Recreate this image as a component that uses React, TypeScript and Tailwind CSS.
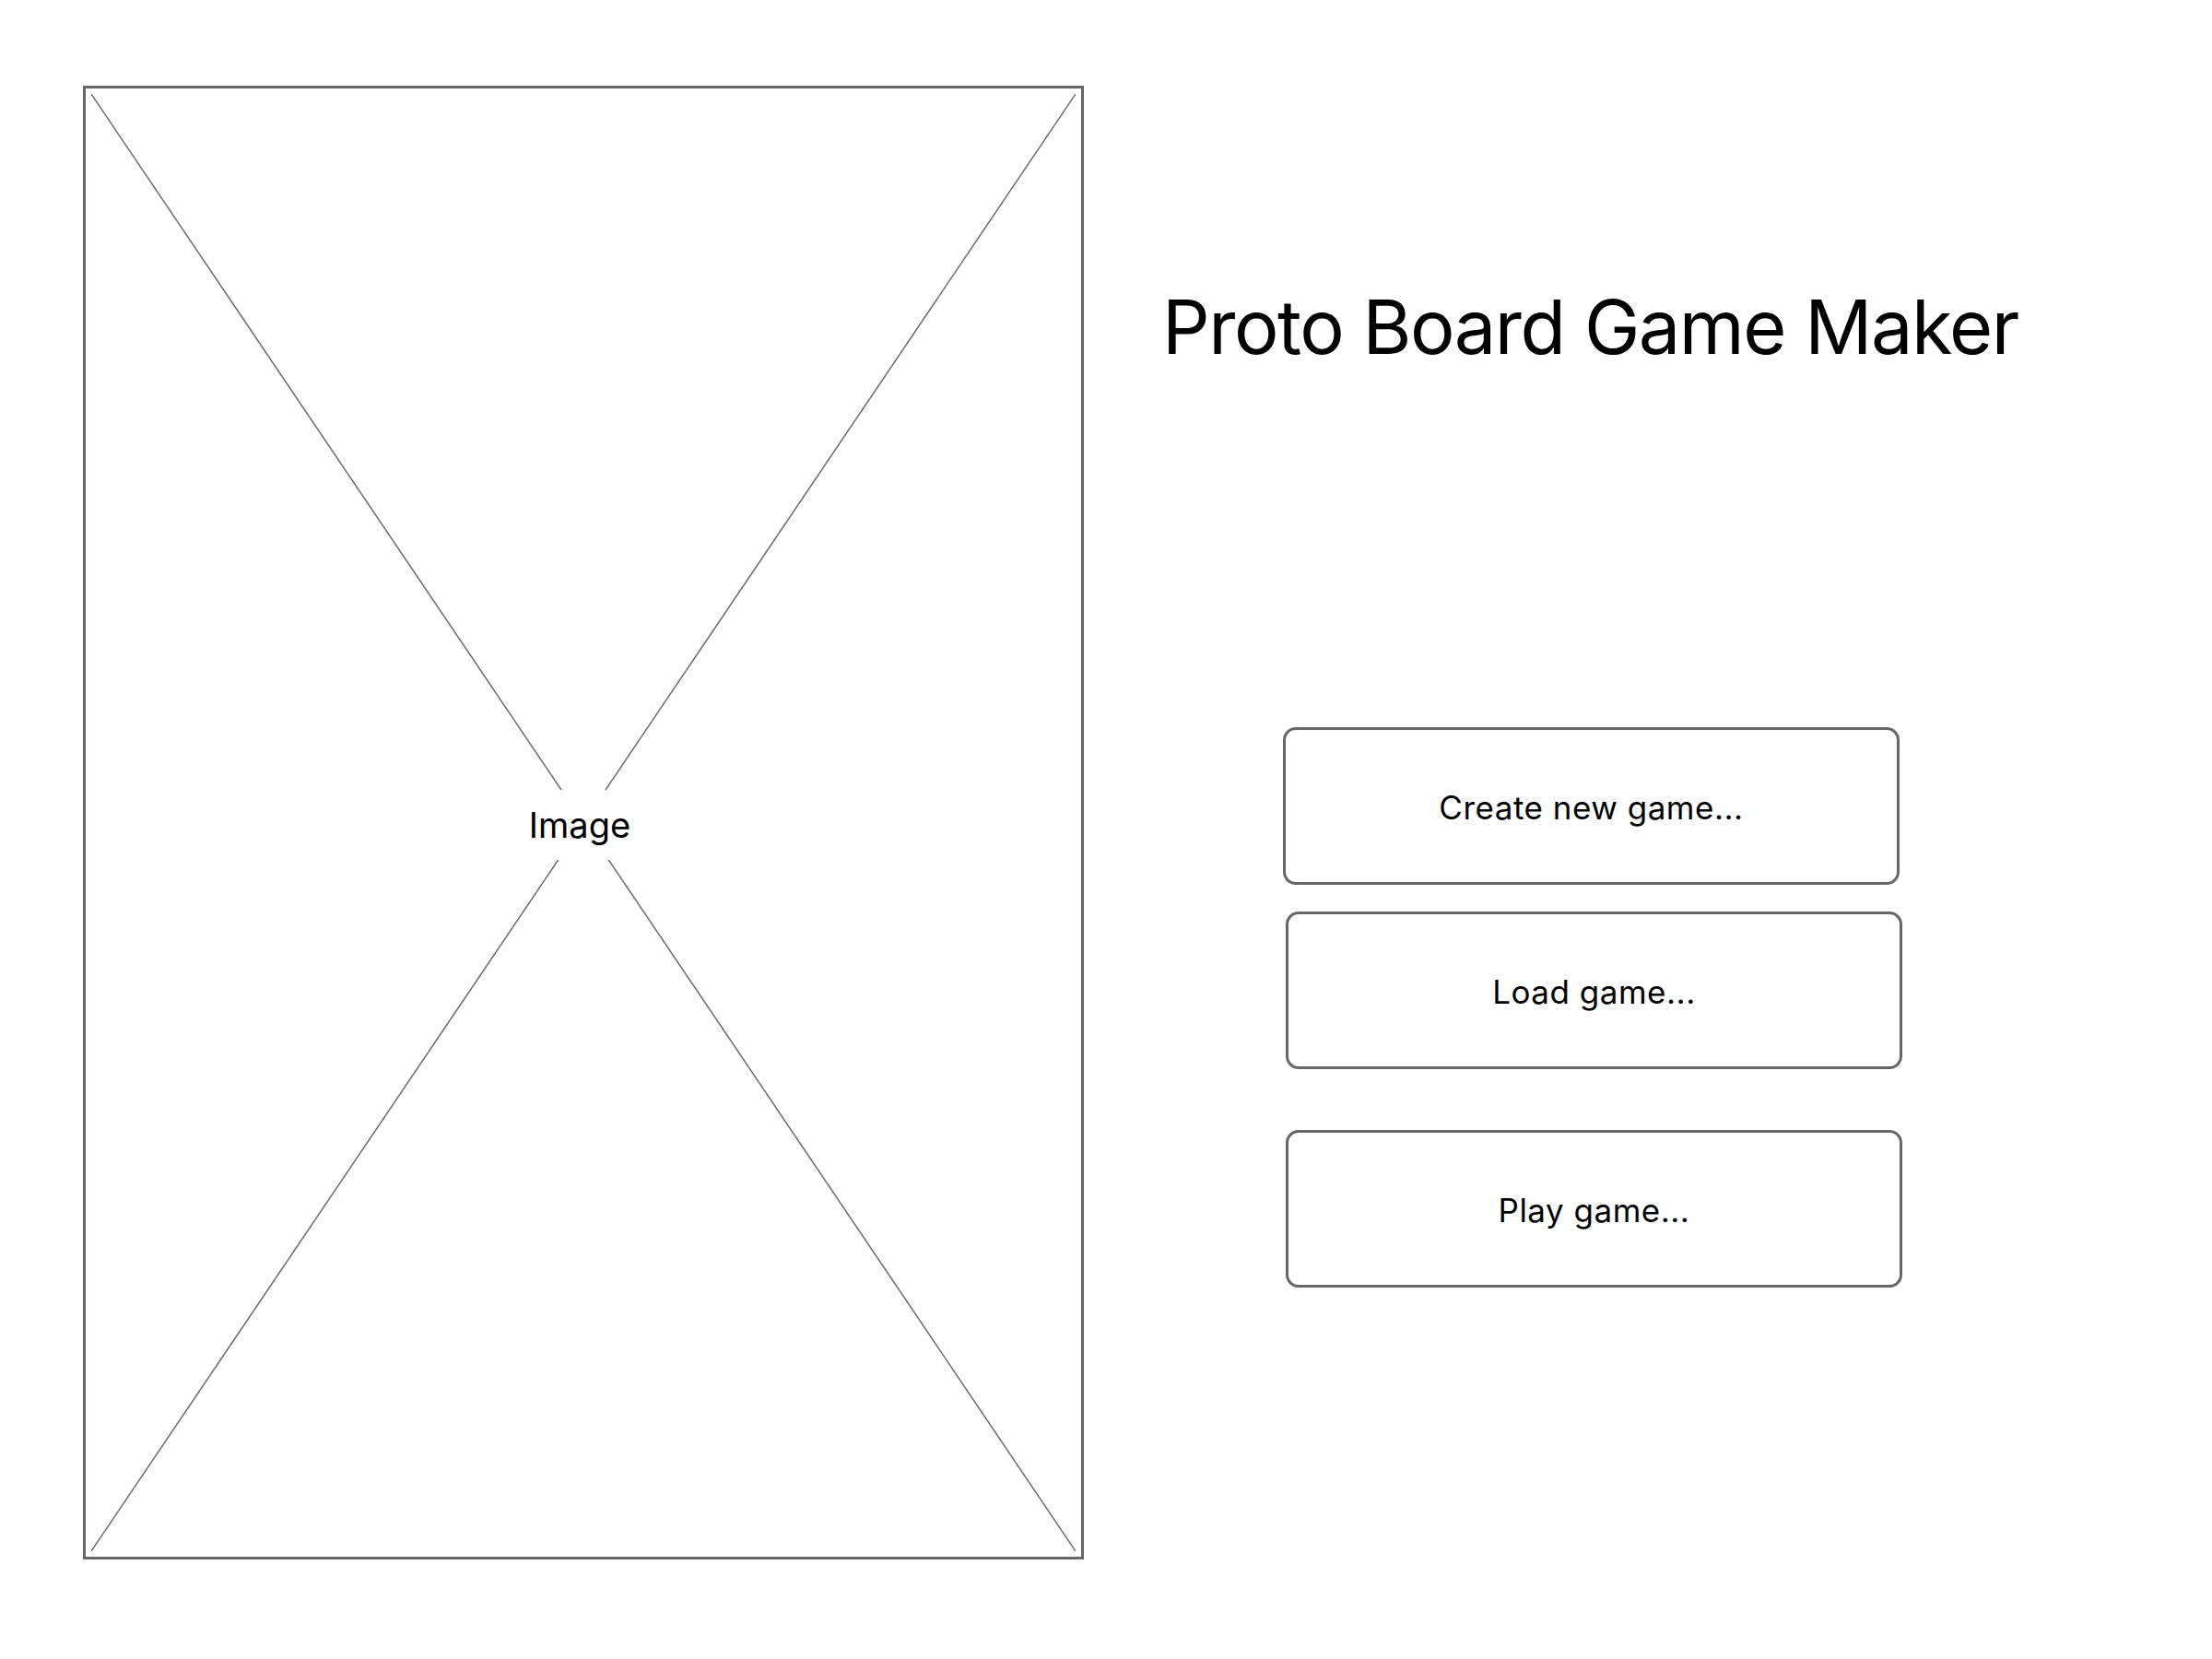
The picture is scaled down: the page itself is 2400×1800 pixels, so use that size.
const font = { fontFamily: "Inter, 'Noto Sans', sans-serif" };

function ImagePlaceholder() {
  return (
    <div className="relative flex h-[1599px] w-[1086px] shrink-0 border-[3px] border-[#666666] bg-white">
      <svg className="m-[6px] flex-1" viewBox="0 0 100 100" preserveAspectRatio="none">
        <line x1="0" y1="0" x2="100" y2="100" stroke="#6b6b6b" strokeWidth="1.5" vectorEffect="non-scaling-stroke" />
        <line x1="100" y1="0" x2="0" y2="100" stroke="#6b6b6b" strokeWidth="1.5" vectorEffect="non-scaling-stroke" />
      </svg>
      <div className="absolute inset-0 flex items-center justify-center pt-[5px] pr-[8px]">
        <span className="bg-white px-[18px] py-[19px] text-[38px] leading-none text-black">Image</span>
      </div>
    </div>
  );
}

function MenuButton({ label, className }: { label: string; className?: string }) {
  return (
    <button
      className={
        "flex h-[171px] w-[669px] items-center justify-center rounded-[14px] border-[3px] border-[#666666] bg-white pt-[4px] text-[35px] tracking-[0.5px] text-black " +
        (className ?? "")
      }
      style={font}
    >
      {label}
    </button>
  );
}

export default function App() {
  return (
    <div className="flex min-h-[1800px] w-[2400px] bg-white pl-[90px] pt-[93px]" style={font}>
      <ImagePlaceholder />
      <div className="ml-[92px] flex flex-col">
        <h1 className="-ml-[7px] mt-[222px] text-[81px] leading-none font-normal tracking-[-1.5px] text-black">Proto Board Game Maker</h1>
        <MenuButton label="Create new game..." className="ml-[124px] mt-[393px]" />
        <MenuButton label="Load game..." className="ml-[127px] mt-[29px]" />
        <MenuButton label="Play game..." className="ml-[127px] mt-[66px]" />
      </div>
    </div>
  );
}
